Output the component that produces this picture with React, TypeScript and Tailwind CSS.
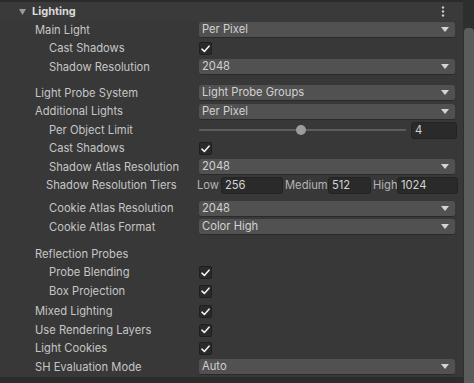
import type { ReactElement, ReactNode } from "react";

function Caret(): ReactElement {
  return (
    <svg width="8" height="5" viewBox="0 0 8 5" className="shrink-0">
      <path d="M0 0 H8 L4 5 Z" fill="#d4d4d4" />
    </svg>
  );
}

function Dropdown({ value }: { value: string }): ReactElement {
  return (
    <div className="flex h-[16px] w-full items-center justify-between rounded-[3px] border-b border-[#2a2a2a] bg-[#515151] pl-[3px] pr-[6px] text-[#d2d2d2]">
      <span className="leading-none">{value}</span>
      <Caret />
    </div>
  );
}

function Checkbox(): ReactElement {
  return (
    <div className="flex h-[13px] w-[13px] items-center justify-center rounded-[2px] border border-[#1f1f1f] bg-[#2a2a2a]">
      <svg width="9" height="8" viewBox="0 0 9 8">
        <path d="M1 4.2 L3.4 6.5 L8 1.2" fill="none" stroke="#f0f0f0" strokeWidth="1.6" strokeLinecap="round" strokeLinejoin="round" />
      </svg>
    </div>
  );
}

function NumField({ value, className }: { value: string; className: string }): ReactElement {
  return (
    <div className={`flex h-[17px] items-center rounded-[3px] border border-[#232323] bg-[#2a2a2a] pl-[3px] text-[#d2d2d2] ${className}`}>
      {value}
    </div>
  );
}

interface RowProps {
  label: string;
  indent: string;
  children?: ReactNode;
}

function Row({ label, indent, children }: RowProps): ReactElement {
  return (
    <div className="flex h-[18.5px] items-center">
      <div className={`w-[199px] shrink-0 whitespace-nowrap text-[#c6c6c6] ${indent}`}>{label}</div>
      <div className="flex flex-1 items-center pr-[8px]">{children}</div>
    </div>
  );
}

export default function App(): ReactElement {
  return (
    <div
      className="flex h-[383px] w-[474px] overflow-hidden bg-[#383838] text-[11.2px] leading-none"
      style={{ fontFamily: "Inter, 'Noto Sans', sans-serif" }}
    >
      <div className="flex w-[463px] flex-col">
        <div className="h-[2px] bg-[#2b2b2b]" />
        <div className="flex h-[19px] items-center bg-[#3a3a3a] pl-[19px] pr-[18px]">
          <svg width="7" height="6" viewBox="0 0 7 6" className="mr-[6px]">
            <path d="M0 0 H7 L3.5 6 Z" fill="#9a9a9a" />
          </svg>
          <span className="flex-1 text-[11px] font-bold text-[#dadada]">Lighting</span>
          <svg width="4" height="11" viewBox="0 0 4 11">
            <circle cx="2" cy="1.5" r="1.2" fill="#c8c8c8" />
            <circle cx="2" cy="5.5" r="1.2" fill="#c8c8c8" />
            <circle cx="2" cy="9.5" r="1.2" fill="#c8c8c8" />
          </svg>
        </div>

        <Row label="Main Light" indent="pl-[35px]">
          <Dropdown value="Per Pixel" />
        </Row>
        <Row label="Cast Shadows" indent="pl-[49px]">
          <Checkbox />
        </Row>
        <Row label="Shadow Resolution" indent="pl-[49px]">
          <Dropdown value="2048" />
        </Row>
        <div className="h-[7.5px]" />

        <Row label="Light Probe System" indent="pl-[35px]">
          <Dropdown value="Light Probe Groups" />
        </Row>
        <Row label="Additional Lights" indent="pl-[35px]">
          <Dropdown value="Per Pixel" />
        </Row>
        <Row label="Per Object Limit" indent="pl-[49px]">
          <div className="relative flex h-[10px] w-[207px] items-center">
            <div className="h-[2px] w-full rounded bg-[#5e5e5e]" />
            <div className="absolute left-[97px] top-0 h-[10px] w-[10px] rounded-full bg-[#9c9c9c]" />
          </div>
          <NumField value="4" className="ml-[5px] w-[46px]" />
        </Row>
        <Row label="Cast Shadows" indent="pl-[49px]">
          <Checkbox />
        </Row>
        <Row label="Shadow Atlas Resolution" indent="pl-[49px]">
          <Dropdown value="2048" />
        </Row>
        <div className="flex h-[18.5px] items-center">
          <div className="w-[197px] shrink-0 whitespace-nowrap pl-[46px] text-[#c6c6c6]">Shadow Resolution Tiers</div>
          <span className="w-[24px] text-[#b4b4b4]">Low</span>
          <NumField value="256" className="w-[62px]" />
          <span className="w-[45px] pl-[2px] text-[#b4b4b4]">Medium</span>
          <NumField value="512" className="w-[43px]" />
          <span className="w-[26px] pl-[2px] text-[#b4b4b4]">High</span>
          <NumField value="1024" className="w-[61px]" />
        </div>
        <div className="h-[4.5px]" />

        <Row label="Cookie Atlas Resolution" indent="pl-[49px]">
          <Dropdown value="2048" />
        </Row>
        <Row label="Cookie Atlas Format" indent="pl-[49px]">
          <Dropdown value="Color High" />
        </Row>
        <div className="h-[8.5px]" />

        <Row label="Reflection Probes" indent="pl-[35px]" />
        <Row label="Probe Blending" indent="pl-[49px]">
          <Checkbox />
        </Row>
        <Row label="Box Projection" indent="pl-[49px]">
          <Checkbox />
        </Row>
        <div className="h-[2px]" />

        <Row label="Mixed Lighting" indent="pl-[35px]">
          <Checkbox />
        </Row>
        <Row label="Use Rendering Layers" indent="pl-[35px]">
          <Checkbox />
        </Row>
        <Row label="Light Cookies" indent="pl-[35px]">
          <Checkbox />
        </Row>
        <Row label="SH Evaluation Mode" indent="pl-[35px]">
          <Dropdown value="Auto" />
        </Row>
        <div className="flex-1 bg-[#2c2c2c]" />
      </div>
      <div className="w-[1px] bg-[#2e2e2e]" />
      <div className="flex w-[10px] flex-col bg-[#2e2e2e]">
        <div className="h-[28px]" />
        <div className="flex-1 rounded-t-[4px] bg-[#5c5c5c]" />
      </div>
    </div>
  );
}
